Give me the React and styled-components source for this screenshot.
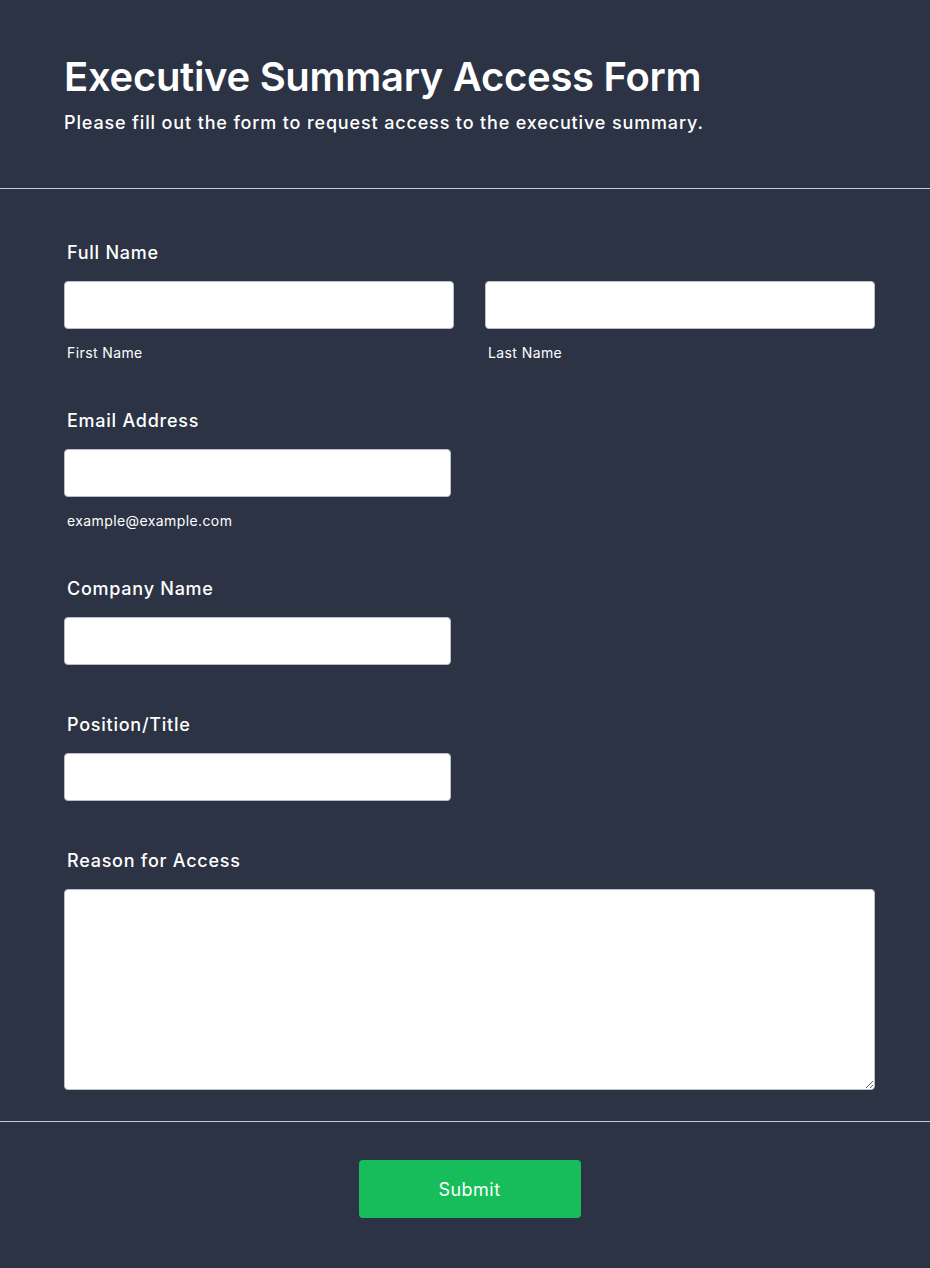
import React from "react";
import styled, { createGlobalStyle } from "styled-components";

const GlobalStyle = createGlobalStyle`
  html, body {
    margin: 0;
    padding: 0;
    background: #2c3345;
  }
  body {
    font-family: Inter, "Noto Sans", sans-serif;
    color: #ffffff;
  }
  * { box-sizing: border-box; }
`;

function App() {
  return (
    <Page>
      <GlobalStyle />
      <Header>
        <Title>Executive Summary Access Form</Title>
        <Subtitle>Please fill out the form to request access to the executive summary.</Subtitle>
      </Header>
      <Form>
        <Field>
          <Label>Full Name</Label>
          <Row>
            <Column>
              <Input type="text" />
              <SubLabel>First Name</SubLabel>
            </Column>
            <Column>
              <Input type="text" />
              <SubLabel>Last Name</SubLabel>
            </Column>
          </Row>
        </Field>
        <Field>
          <Label>Email Address</Label>
          <Input type="email" $half />
          <SubLabel>example@example.com</SubLabel>
        </Field>
        <Field>
          <Label>Company Name</Label>
          <Input type="text" $half />
        </Field>
        <Field>
          <Label>Position/Title</Label>
          <Input type="text" $half />
        </Field>
        <Field $last>
          <Label>Reason for Access</Label>
          <TextArea />
        </Field>
      </Form>
      <Footer>
        <SubmitButton type="button">Submit</SubmitButton>
      </Footer>
    </Page>
  );
}

export default App;

const Page = styled.div`
  width: 930px;
  min-height: 1268px;
  background: #2c3345;
`;

const Header = styled.header`
  padding: 51px 55px 0 64px;
  height: 189px;
  border-bottom: 1px solid #c5cbd6;
`;

const Title = styled.h1`
  margin: 0;
  font-size: 40px;
  line-height: 52px;
  font-weight: 600;
  letter-spacing: -0.3px;
`;

const Subtitle = styled.p`
  margin: 8px 0 0;
  font-size: 18px;
  line-height: 24px;
  font-weight: 500;
  letter-spacing: 0.85px;
`;

const Form = styled.div`
  padding: 50px 55px 0 64px;
  border-bottom: 1px solid #c5cbd6;
`;

const Field = styled.div`
  margin-bottom: ${(p) => (p.$last ? "31px" : "46px")};
`;

const Label = styled.label`
  display: block;
  padding: 2px 0 0 3px;
  font-size: 18px;
  line-height: 24px;
  font-weight: 500;
  letter-spacing: 0.75px;
  margin-bottom: 16px;
`;

const Row = styled.div`
  display: grid;
  grid-template-columns: 390px 390px;
  column-gap: 31px;
`;

const Column = styled.div`
  display: flex;
  flex-direction: column;
`;

const Input = styled.input`
  display: block;
  width: ${(p) => (p.$half ? "387px" : "100%")};
  height: 48px;
  border: 1px solid #b8bdc9;
  border-radius: 4px;
  background: #ffffff;
  padding: 0 12px;
  font-family: inherit;
  font-size: 16px;
  outline: none;
`;

const SubLabel = styled.span`
  display: block;
  padding-left: 3px;
  margin-top: 16px;
  font-size: 14px;
  line-height: 16px;
  letter-spacing: 0.4px;
  color: #ffffff;
`;

const TextArea = styled.textarea`
  display: block;
  width: 811px;
  height: 201px;
  border: 1px solid #b8bdc9;
  border-radius: 4px;
  background: #ffffff;
  padding: 10px 12px;
  font-family: inherit;
  font-size: 16px;
  outline: none;
`;

const Footer = styled.div`
  display: flex;
  justify-content: center;
  padding: 38px 55px 0 64px;
`;

const SubmitButton = styled.button`
  width: 222px;
  height: 58px;
  background: #18bd5b;
  border: none;
  border-radius: 4px;
  color: #ffffff;
  font-family: inherit;
  font-size: 18px;
  font-weight: 400;
  letter-spacing: 0.5px;
  cursor: pointer;
`;
